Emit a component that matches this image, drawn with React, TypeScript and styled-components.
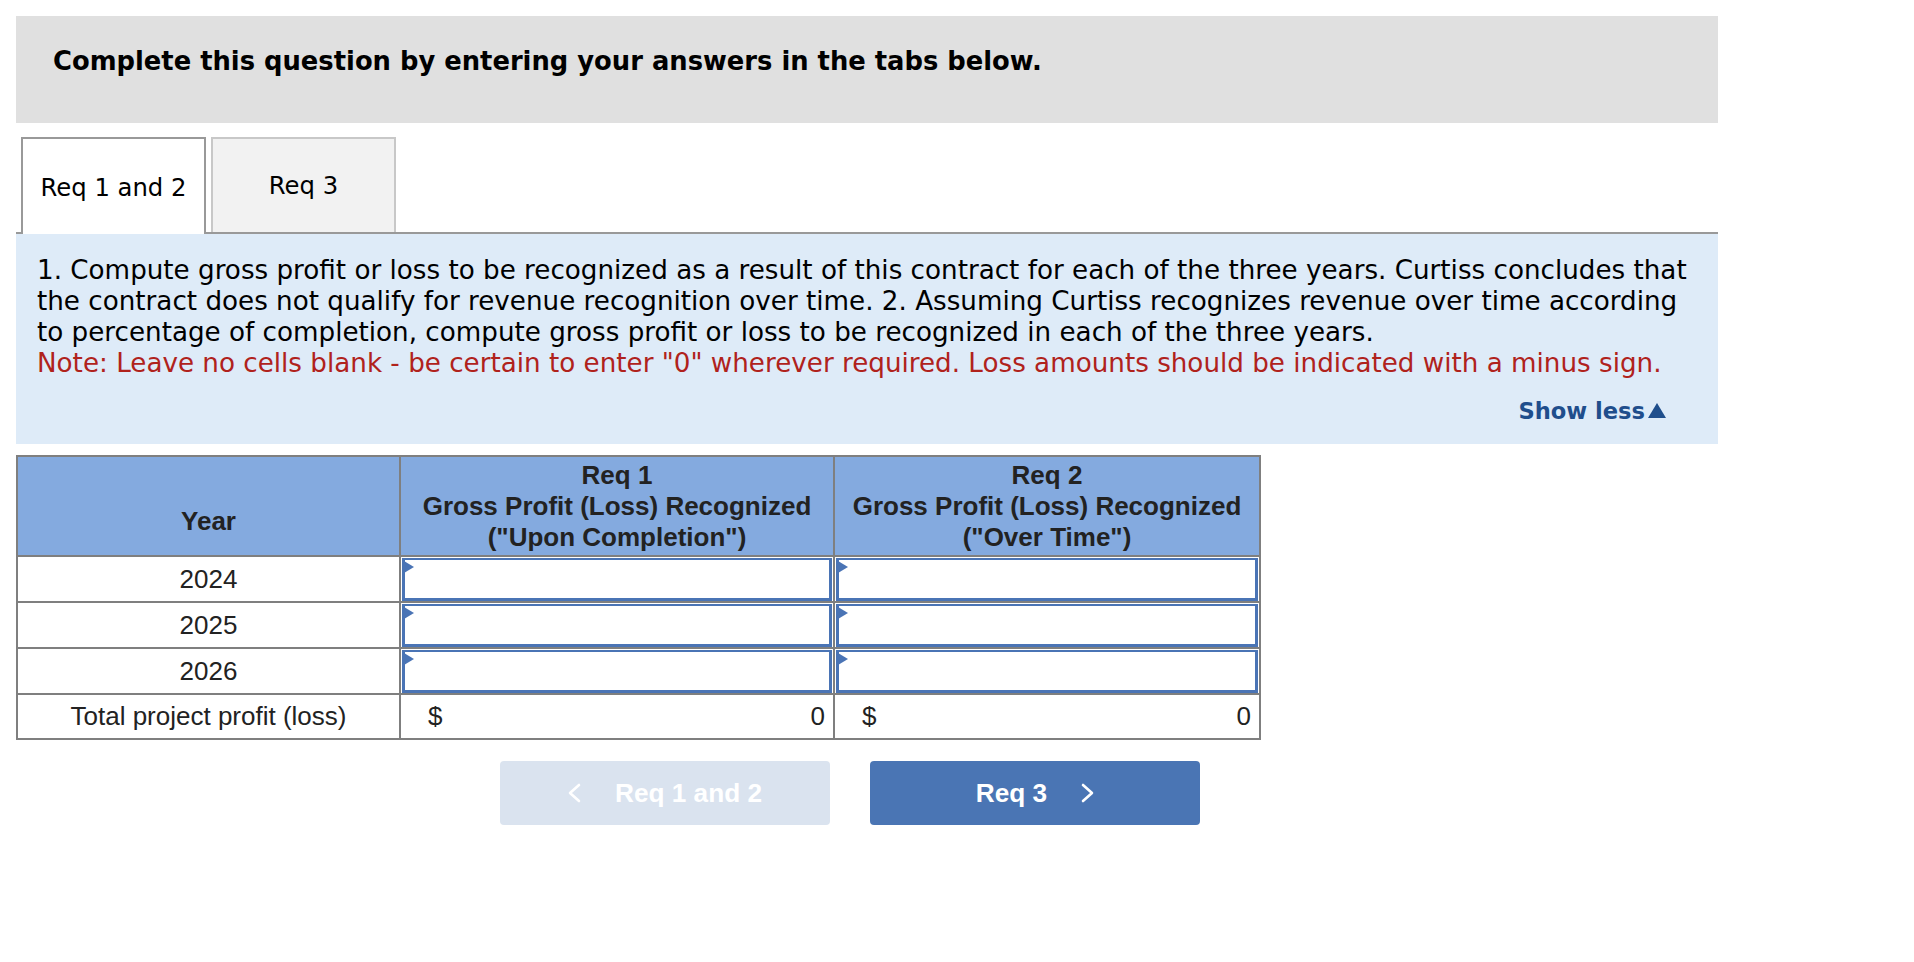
import React from 'react';
import styled, { createGlobalStyle } from 'styled-components';

const GlobalStyle = createGlobalStyle`
  body {
    margin: 0;
    background: #ffffff;
    font-family: "DejaVu Sans", Verdana, sans-serif;
    color: #000;
  }
`;

interface Row {
    year: string;
}

const rows: Row[] = [{ year: '2024' }, { year: '2025' }, { year: '2026' }];

const Chevron: React.FC<{ dir: 'left' | 'right' }> = ({ dir }) => (
    <svg width="13" height="20" viewBox="0 0 13 20">
        <polyline
            points={dir === 'right' ? '2,2 11,10 2,18' : '11,2 2,10 11,18'}
            fill="none"
            stroke="#ffffff"
            strokeWidth="2.6"
            strokeLinecap="round"
            strokeLinejoin="round"
        />
    </svg>
);

const App: React.FC = () => {
    return (
        <Page>
            <GlobalStyle />
            <Banner>
                <h2>Complete this question by entering your answers in the tabs below.</h2>
            </Banner>

            <TabBar>
                <Tab active>Req 1 and 2</Tab>
                <Tab>Req 3</Tab>
            </TabBar>

            <InfoBox>
                <p>
                    1. Compute gross profit or loss to be recognized as a result of this contract for each of
                    the three years. Curtiss concludes that the contract does not qualify for revenue
                    recognition over time. 2. Assuming Curtiss recognizes revenue over time according to
                    percentage of completion, compute gross profit or loss to be recognized in each of the
                    three years.
                </p>
                <Note>
                    Note: Leave no cells blank - be certain to enter "0" wherever required. Loss amounts
                    should be indicated with a minus sign.
                </Note>
                <ShowLess>
                    Show less<Arrow />
                </ShowLess>
            </InfoBox>

            <Table>
                <colgroup>
                    <col style={{ width: 383 }} />
                    <col style={{ width: 434 }} />
                    <col style={{ width: 426 }} />
                </colgroup>
                <thead>
                    <tr>
                        <HeadCell low>Year</HeadCell>
                        <HeadCell>
                            Req 1<br />
                            Gross Profit (Loss) Recognized<br />
                            ("Upon Completion")
                        </HeadCell>
                        <HeadCell>
                            Req 2<br />
                            Gross Profit (Loss) Recognized<br />
                            ("Over Time")
                        </HeadCell>
                    </tr>
                </thead>
                <tbody>
                    {rows.map((r) => (
                        <tr key={r.year}>
                            <LabelCell>{r.year}</LabelCell>
                            <InputCell>
                                <InputWrap>
                                    <Entry type="text" />
                                </InputWrap>
                            </InputCell>
                            <InputCell>
                                <InputWrap>
                                    <Entry type="text" />
                                </InputWrap>
                            </InputCell>
                        </tr>
                    ))}
                    <tr>
                        <LabelCell>Total project profit (loss)</LabelCell>
                        <AmountCell>
                            <span>$</span>
                            <span>0</span>
                        </AmountCell>
                        <AmountCell>
                            <span>$</span>
                            <span>0</span>
                        </AmountCell>
                    </tr>
                </tbody>
            </Table>

            <NavRow>
                <NavButton disabled>
                    <Chevron dir="left" />
                    Req 1 and 2
                </NavButton>
                <NavButton>
                    Req 3
                    <Chevron dir="right" />
                </NavButton>
            </NavRow>
        </Page>
    );
};

export default App;

const Page = styled.div`
  width: 1702px;
  padding: 16px 0 0 16px;
`;

const Banner = styled.div`
  background: #e0e0e0;
  height: 107px;
  padding: 30px 0 0 37px;
  box-sizing: border-box;

  > h2 {
    margin: 0;
    font-size: 25.8px;
    line-height: 30px;
    font-weight: bold;
    color: #000;
  }
`;

const TabBar = styled.div`
  display: flex;
  gap: 5px;
  margin-top: 14px;
  padding-left: 5px;
  border-bottom: 2px solid #999999;
  height: 95px;
`;

const Tab = styled.div<{ active?: boolean }>`
  width: 185px;
  box-sizing: border-box;
  display: flex;
  align-items: center;
  justify-content: center;
  font-size: 24.3px;
  color: #000;
  background: ${(p) => (p.active ? '#ffffff' : '#f2f2f2')};
  border: 2px solid ${(p) => (p.active ? '#999999' : '#c8c8c8')};
  border-bottom: none;
  height: ${(p) => (p.active ? '97px' : '95px')};
  padding-top: ${(p) => (p.active ? '2px' : '0')};
  position: relative;
  z-index: 1;
`;

const InfoBox = styled.div`
  background: #deebf8;
  padding: 21px 18px 0 21px;
  height: 210px;
  box-sizing: border-box;
  font-size: 26.2px;
  line-height: 31px;

  > p {
    margin: 0;
  }
`;

const Note = styled.p`
  color: #b0221c;
`;

const ShowLess = styled.div`
  display: flex;
  justify-content: flex-end;
  align-items: center;
  gap: 3px;
  padding-right: 34px;
  margin-top: 18px;
  font-weight: bold;
  font-size: 22.6px;
  line-height: 28px;
  color: #1f4e8c;
`;

const Arrow = styled.span`
  width: 0;
  height: 0;
  border-left: 9.5px solid transparent;
  border-right: 9.5px solid transparent;
  border-bottom: 15px solid #1f4e8c;
  margin-top: -2px;
`;

const Table = styled.table`
  margin-top: 11px;
  border-collapse: collapse;
  width: 1243px;
  table-layout: fixed;
  font-family: "Liberation Sans", Arial, sans-serif;
  font-size: 26px;
  color: #222;
  border: 2px solid #7f7f7f;
`;

const HeadCell = styled.th<{ low?: boolean }>`
  background: #84aadf;
  border: 2px solid #7f7f7f;
  height: 100px;
  box-sizing: border-box;
  padding: ${(p) => (p.low ? '30px 4px 0' : '0 4px')};
  font-weight: bold;
  line-height: 31px;
  text-align: center;
  vertical-align: middle;
`;

const LabelCell = styled.td`
  border: 2px solid #7f7f7f;
  height: 43px;
  padding: 0;
  text-align: center;
`;

const InputCell = styled.td`
  border: 2px solid #7f7f7f;
  padding: 1px 1px 0;
  height: 43px;
`;

const InputWrap = styled.div`
  position: relative;

  &::before {
    content: '';
    position: absolute;
    left: 2px;
    top: 3px;
    border-top: 6.5px solid transparent;
    border-bottom: 6.5px solid transparent;
    border-left: 10px solid #4a74b5;
  }
`;

const Entry = styled.input`
  display: block;
  width: 100%;
  height: 43px;
  box-sizing: border-box;
  border: 3px solid #4a74b5;
  border-top-width: 2px;
  outline: none;
  background: #fff;
  font-size: 22px;
`;

const AmountCell = styled.td`
  border: 2px solid #7f7f7f;
  height: 43px;
  padding: 0 8px 0 27px;

  > span:first-child {
    float: left;
  }
  > span:last-child {
    float: right;
  }
`;

const NavRow = styled.div`
  display: flex;
  gap: 40px;
  margin: 21px 0 0 484px;
`;

const NavButton = styled.button`
  width: 330px;
  height: 64px;
  border: none;
  border-radius: 4px;
  background: ${(p) => (p.disabled ? '#dae3ef' : '#4a75b4')};
  color: #ffffff;
  font-family: "Liberation Sans", Arial, sans-serif;
  font-weight: bold;
  font-size: 26.2px;
  display: flex;
  align-items: center;
  justify-content: center;
  gap: 34px;
  padding: 0;
  cursor: pointer;
`;
